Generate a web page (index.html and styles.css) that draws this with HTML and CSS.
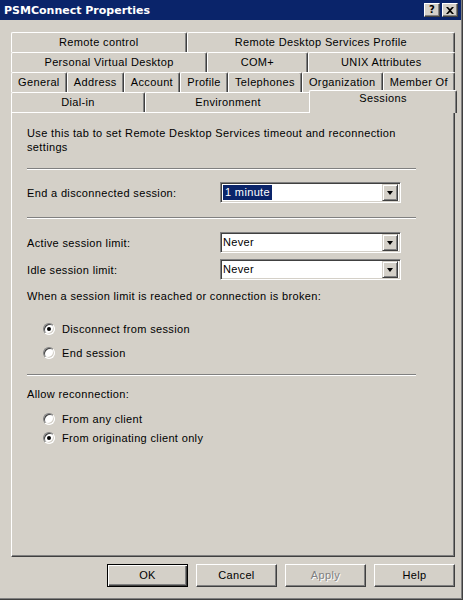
FILE: index.html
```html
<!DOCTYPE html>
<html lang="en">
<head>
    <meta charset="UTF-8">
    <title>PSMConnect Properties</title>
    <link rel="stylesheet" href="styles.css">
</head>
<body>
    <div class="window">
        <div class="titlebar">
            <span class="title">PSMConnect Properties</span>
            <div class="caption-buttons">
                <span class="cap-btn help-btn">?</span>
                <span class="cap-btn">
                    <svg width="8" height="7" viewBox="0 0 8 7">
                        <path d="M0 0h2l2 2 2-2h2L5 3.5 8 7H6L4 5 2 7H0l3-3.5z" fill="#000"/>
                    </svg>
                </span>
            </div>
        </div>
        <div class="dialog">
            <div class="tabs">
                <div class="tab-row">
                    <div class="tab">Remote control</div>
                    <div class="tab">Remote Desktop Services Profile</div>
                </div>
                <div class="tab-row">
                    <div class="tab">Personal Virtual Desktop</div>
                    <div class="tab">COM+</div>
                    <div class="tab">UNIX Attributes</div>
                </div>
                <div class="tab-row">
                    <div class="tab">General</div>
                    <div class="tab">Address</div>
                    <div class="tab">Account</div>
                    <div class="tab">Profile</div>
                    <div class="tab">Telephones</div>
                    <div class="tab">Organization</div>
                    <div class="tab">Member Of</div>
                </div>
                <div class="tab-row">
                    <div class="tab">Dial-in</div>
                    <div class="tab">Environment</div>
                    <div class="tab selected">Sessions</div>
                </div>
            </div>

            <div class="panel">
                <p class="intro">Use this tab to set Remote Desktop Services timeout and reconnection settings</p>
                <div class="sep sep-first"></div>

                <div class="field field-first">
                    <label>End a disconnected session:</label>
                    <div class="combo">
                        <span class="combo-text"><span class="selected-text">1 minute</span></span>
                        <span class="drop"><span class="arrow"></span></span>
                    </div>
                </div>
                <div class="sep sep-second"></div>

                <div class="field field-active">
                    <label>Active session limit:</label>
                    <div class="combo">
                        <span class="combo-text">Never</span>
                        <span class="drop"><span class="arrow"></span></span>
                    </div>
                </div>
                <div class="field field-idle">
                    <label>Idle session limit:</label>
                    <div class="combo">
                        <span class="combo-text">Never</span>
                        <span class="drop"><span class="arrow"></span></span>
                    </div>
                </div>

                <div class="group-label limit-label">When a session limit is reached or connection is broken:</div>
                <div class="radio radio-a1"><span class="radio-dot checked"></span>Disconnect from session</div>
                <div class="radio radio-a2"><span class="radio-dot"></span>End session</div>
                <div class="sep sep-third"></div>

                <div class="group-label reconnect-label">Allow reconnection:</div>
                <div class="radio radio-b1"><span class="radio-dot"></span>From any client</div>
                <div class="radio radio-b2"><span class="radio-dot checked"></span>From originating client only</div>
            </div>

            <div class="buttons">
                <div class="btn default">OK</div>
                <div class="btn">Cancel</div>
                <div class="btn disabled">Apply</div>
                <div class="btn">Help</div>
            </div>
        </div>
    </div>
</body>
</html>
```

FILE: styles.css
```css
body {
    margin: 0;
    background-color: #d4d0c8;
    font-family: "Liberation Sans", Arial, sans-serif;
    font-size: 11px;
    letter-spacing: 0.35px;
    color: #000;
}
.window {
    width: 463px;
    height: 600px;
    box-sizing: border-box;
    display: flex;
    flex-direction: column;
    background-color: #d4d0c8;
    border-right: 1px solid #404040;
    border-bottom: 1px solid #404040;
    box-shadow: inset -1px -1px #808080;
}
.titlebar {
    height: 20px;
    margin-right: 1px;
    display: flex;
    align-items: center;
    justify-content: space-between;
    background-color: #0a246a;
}
.title {
    padding-left: 4px;
    color: #fff;
    font-family: "DejaVu Sans", Tahoma, sans-serif;
    font-weight: bold;
    font-size: 11px;
    letter-spacing: 0;
}
.caption-buttons {
    display: flex;
    gap: 2px;
    padding-right: 3px;
}
.cap-btn {
    width: 16px;
    height: 14px;
    box-sizing: border-box;
    display: flex;
    align-items: center;
    justify-content: center;
    background-color: #d4d0c8;
    border: 1px solid;
    border-color: #fff #404040 #404040 #fff;
    box-shadow: inset -1px -1px #808080;
}
.help-btn {
    font-family: "DejaVu Sans", sans-serif;
    font-weight: bold;
    font-size: 10px;
    line-height: 12px;
    letter-spacing: 0;
}
.dialog {
    flex: 1;
    display: flex;
    flex-direction: column;
    padding: 12px 7px 12px 11px;
}

/* tabs */
.tab-row {
    display: flex;
    height: 20px;
}
.tab {
    flex: 1 1 auto;
    height: 20px;
    box-sizing: border-box;
    text-align: center;
    line-height: 19px;
    white-space: nowrap;
    border-top: 1px solid #fff;
    border-left: 1px solid #fff;
    border-right: 1px solid #404040;
    border-radius: 2px 2px 0 0;
    box-shadow: inset -1px 0 #808080;
}
.tab.selected {
    position: relative;
    top: -2px;
    height: 23px;
    margin: 0 -2px;
    line-height: 15px;
    background-color: #d4d0c8;
    z-index: 1;
}

/* panel */
.panel {
    flex: 1;
    padding: 13px 15px 0 15px;
    border: 1px solid;
    border-color: #fff #404040 #404040 #fff;
    box-shadow: inset -1px -1px #808080;
}
.intro {
    margin: 0;
    width: 390px;
    line-height: 14px;
}
.sep {
    width: 389px;
    height: 1px;
    background-color: #808080;
    border-bottom: 1px solid #fff;
}
.sep-first { margin-top: 14px; }
.sep-second { margin-top: 14px; }
.sep-third { margin-top: 13px; }

.field {
    display: flex;
    align-items: center;
    height: 21px;
}
.field label {
    width: 193px;
}
.field-first { margin-top: 12px; }
.field-active { margin-top: 13px; }
.field-idle { margin-top: 6px; }

.combo {
    width: 181px;
    height: 21px;
    box-sizing: border-box;
    display: flex;
    align-items: center;
    padding: 2px;
    background-color: #fff;
    border: 1px solid;
    border-color: #808080 #fff #fff #808080;
    box-shadow: inset 1px 1px #404040, inset -1px -1px #d4d0c8;
}
.combo-text {
    flex: 1;
    line-height: 15px;
}
.selected-text {
    display: inline-block;
    padding: 0 2px;
    background-color: #0a246a;
    color: #fff;
}
.drop {
    width: 16px;
    height: 17px;
    box-sizing: border-box;
    display: flex;
    align-items: center;
    justify-content: center;
    background-color: #d4d0c8;
    border: 1px solid;
    border-color: #d4d0c8 #404040 #404040 #d4d0c8;
    box-shadow: inset 1px 1px #fff, inset -1px -1px #808080;
}
.arrow {
    width: 0;
    height: 0;
    border-left: 3.5px solid transparent;
    border-right: 3.5px solid transparent;
    border-top: 4px solid #000;
}

.group-label {
    line-height: 14px;
}
.limit-label { margin-top: 9px; }
.reconnect-label { margin-top: 11px; }

.radio {
    display: flex;
    align-items: center;
    height: 16px;
}
.radio-a1 { margin-top: 18px; }
.radio-a2 { margin-top: 8px; }
.radio-b1 { margin-top: 10px; }
.radio-b2 { margin-top: 3px; }
.radio-dot {
    width: 12px;
    height: 12px;
    box-sizing: border-box;
    margin: 0 7px 0 16px;
    display: flex;
    align-items: center;
    justify-content: center;
    border-radius: 50%;
    background-color: #fff;
    border: 1px solid;
    border-color: #808080 #fff #fff #808080;
    box-shadow: inset 1px 1px #404040, inset -1px -1px #d4d0c8;
}
.radio-dot.checked::after {
    content: "";
    width: 4px;
    height: 4px;
    border-radius: 50%;
    background-color: #000;
}

/* bottom buttons */
.buttons {
    display: flex;
    justify-content: flex-end;
    gap: 8px;
    margin-top: 7px;
}
.btn {
    width: 81px;
    height: 23px;
    box-sizing: border-box;
    text-align: center;
    line-height: 21px;
    border: 1px solid;
    border-color: #fff #404040 #404040 #fff;
    box-shadow: inset -1px -1px #808080;
}
.btn.default {
    border: 1px solid #000;
    box-shadow: inset 1px 1px #fff, inset -1px -1px #404040, inset -2px -2px #808080;
}
.btn.disabled {
    color: #808080;
    text-shadow: 1px 1px #fff;
}
```
